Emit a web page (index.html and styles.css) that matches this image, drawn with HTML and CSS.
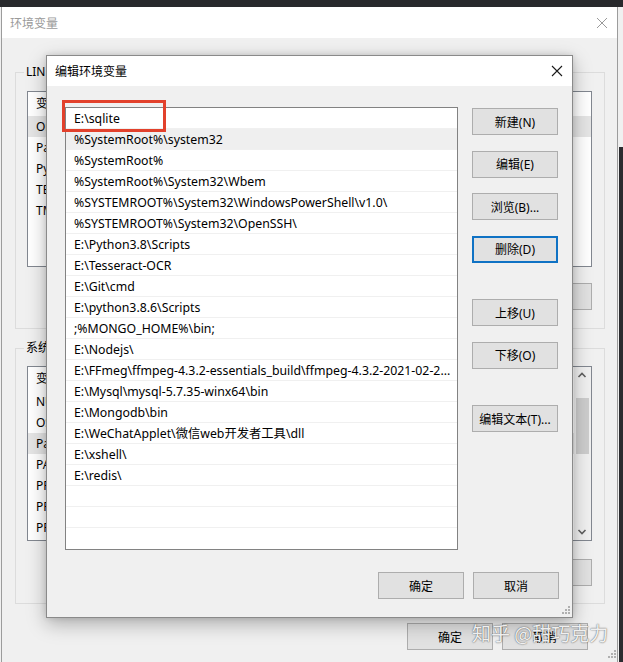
FILE: index.html
```html
<!DOCTYPE html>
<html lang="zh-CN">
<head>
<meta charset="utf-8">
<title>编辑环境变量</title>
<link rel="stylesheet" href="styles.css">
</head>
<body>
<div class="topbar"></div>
<div class="win">
  <div class="win-title">
    <span class="win-caption">环境变量</span>
    <svg class="win-close" width="12" height="12" viewBox="0 0 12 12"><path d="M1 1L11 11M11 1L1 11" stroke="#9a9a9a" stroke-width="1" fill="none"/></svg>
  </div>
  <div class="win-body">
    <div class="group g1">
      <div class="group-title">LIN 的用户变量(U)</div>
      <div class="lv lv1">
        <div class="lv-head">变量</div>
        <div class="lv-row sel">OneDrive</div>
        <div class="lv-row">Path</div>
        <div class="lv-row">PyCharm</div>
        <div class="lv-row">TEMP</div>
        <div class="lv-row">TMP</div>
      </div>
      <div class="group-btns"><button class="btn">新建(N)...</button><button class="btn">编辑(E)...</button><button class="btn">删除(D)</button></div>
    </div>
    <div class="group g2">
      <div class="group-title">系统变量(S)</div>
      <div class="lv lv2">
        <div class="lv-main">
          <div class="lv-head">变量</div>
          <div class="lv-row">NUMBER_OF_PROCESSORS</div>
          <div class="lv-row">OS</div>
          <div class="lv-row sel">Path</div>
          <div class="lv-row">PATHEXT</div>
          <div class="lv-row">PROCESSOR_ARCHITECTURE</div>
          <div class="lv-row">PROCESSOR_IDENTIFIER</div>
          <div class="lv-row">PROCESSOR_LEVEL</div>
        </div>
        <div class="vscroll">
          <svg width="16" height="17" viewBox="0 0 16 17"><path d="M4.5 10L8 6.5L11.5 10" stroke="#606060" stroke-width="1.6" fill="none"/></svg>
          <div class="vtrack"><div class="vthumb"></div></div>
          <svg width="16" height="17" viewBox="0 0 16 17"><path d="M4.5 7L8 10.5L11.5 7" stroke="#606060" stroke-width="1.6" fill="none"/></svg>
        </div>
      </div>
      <div class="group-btns"><button class="btn">新建(W)...</button><button class="btn">编辑(I)...</button><button class="btn">删除(L)</button></div>
    </div>
    <div class="win-foot"><button class="btn">确定</button><button class="btn">取消</button></div>
  </div>
  <svg class="grip grip-win" width="8" height="8" viewBox="0 0 8 8"><g fill="#b0b0b0"><rect x="6" y="0" width="2" height="2"/><rect x="3" y="3" width="2" height="2"/><rect x="6" y="3" width="2" height="2"/><rect x="0" y="6" width="2" height="2"/><rect x="3" y="6" width="2" height="2"/><rect x="6" y="6" width="2" height="2"/></g></svg>
</div>
<div class="desk-strip"></div>

<div class="dlg">
  <div class="dlg-title">
    <span class="dlg-caption">编辑环境变量</span>
    <svg class="dlg-close" width="12" height="12" viewBox="0 0 12 12"><path d="M1 1L11 11M11 1L1 11" stroke="#1a1a1a" stroke-width="1.1" fill="none"/></svg>
  </div>
  <div class="dlg-body">
    <div class="dlg-main">
      <div class="plist">
        <div class="hl"></div>
        <div class="prow">E:\sqlite</div>
        <div class="prow hov">%SystemRoot%\system32</div>
        <div class="prow">%SystemRoot%</div>
        <div class="prow">%SystemRoot%\System32\Wbem</div>
        <div class="prow">%SYSTEMROOT%\System32\WindowsPowerShell\v1.0\</div>
        <div class="prow">%SYSTEMROOT%\System32\OpenSSH\</div>
        <div class="prow">E:\Python3.8\Scripts</div>
        <div class="prow">E:\Tesseract-OCR</div>
        <div class="prow">E:\Git\cmd</div>
        <div class="prow">E:\python3.8.6\Scripts</div>
        <div class="prow">;%MONGO_HOME%\bin;</div>
        <div class="prow">E:\Nodejs\</div>
        <div class="prow">E:\FFmeg\ffmpeg-4.3.2-essentials_build\ffmpeg-4.3.2-2021-02-2...</div>
        <div class="prow">E:\Mysql\mysql-5.7.35-winx64\bin</div>
        <div class="prow">E:\Mongodb\bin</div>
        <div class="prow">E:\WeChatApplet\微信web开发者工具\dll</div>
        <div class="prow">E:\xshell\</div>
        <div class="prow">E:\redis\</div>
        <div class="prow"></div>
        <div class="prow"></div>
        <div class="prow last"></div>
      </div>
      <div class="side">
        <button class="btn">新建(N)</button>
        <button class="btn">编辑(E)</button>
        <button class="btn">浏览(B)...</button>
        <button class="btn focus">删除(D)</button>
        <button class="btn sep">上移(U)</button>
        <button class="btn">下移(O)</button>
        <button class="btn sep">编辑文本(T)...</button>
      </div>
    </div>
    <div class="dlg-foot"><button class="btn">确定</button><button class="btn">取消</button></div>
  </div>
  <svg class="grip grip-dlg" width="8" height="8" viewBox="0 0 8 8"><g fill="#b0b0b0"><rect x="6" y="0" width="2" height="2"/><rect x="3" y="3" width="2" height="2"/><rect x="6" y="3" width="2" height="2"/><rect x="0" y="6" width="2" height="2"/><rect x="3" y="6" width="2" height="2"/><rect x="6" y="6" width="2" height="2"/></g></svg>
</div>

<div class="watermark">知乎 @甜巧克力</div>
</body>
</html>
```

FILE: styles.css
```css
* { box-sizing: border-box; }
html, body { margin: 0; padding: 0; }
body {
  width: 623px;
  height: 662px;
  overflow: hidden;
  position: relative;
  background: #f0f0f0;
  font-family: "Noto Sans", "Noto Sans CJK SC", sans-serif;
  font-size: 12px;
  color: #000;
}
.topbar { height: 7px; background: #28292c; }

/* ---------- back window ---------- */
.win {
  margin-left: 1px;
  width: 617px;
  height: 655px;
  background: #f0f0f0;
  border-left: 1px solid #9c9c9c;
  border-right: 1px solid #9c9c9c;
  position: relative;
}
.win-title {
  height: 31px;
  background: #fff;
  display: flex;
  align-items: center;
  padding-left: 8px;
  padding-right: 9px;
}
.win-caption { color: #9a9a9a; flex: 1; }
.win-body { padding: 34px 12px 0 13px; }
.group {
  border: 1px solid #dcdcdc;
  padding: 0 12px 0 11px;
}
.group-title {
  width: fit-content;
  margin-top: -9px;
  margin-left: -3px;
  padding: 0 2px;
  line-height: 16px;
  background: #f0f0f0;
  white-space: nowrap;
}
.g1 { padding-bottom: 18px; }
.g2 { margin-top: 19px; padding-bottom: 17px; }
.lv {
  border: 1px solid #828790;
  background: #fff;
}
.lv1 { margin-top: 11px; height: 176px; }
.lv2 { margin-top: 10px; height: 175px; display: flex; }
.lv-main { flex: 1; }
.lv-head { height: 24px; line-height: 24px; padding-left: 8px; }
.lv-row { height: 21px; line-height: 21px; padding-left: 8px; }
.lv-row.sel { background: #e5e5e5; }
.vscroll {
  width: 17px;
  background: #f0f0f0;
  display: flex;
  flex-direction: column;
}
.vscroll svg { display: block; }
.vtrack { flex: 1; padding: 14px 1px 5px; }
.vthumb { height: 56px; background: #cdcdcd; margin-left: 1px; margin-right: 1px; }
.group-btns {
  display: flex;
  justify-content: flex-end;
  gap: 9px;
  margin-top: 16px;
}
.g2 .group-btns { margin-top: 18px; }
.btn {
  width: 86px;
  height: 27px;
  padding: 0;
  margin: 0;
  background: #e1e1e1;
  border: 1px solid #adadad;
  font-family: "Noto Sans", "Noto Sans CJK SC", sans-serif;
  font-size: 12px;
  color: #000;
  text-align: center;
}
.win-foot {
  display: flex;
  justify-content: flex-end;
  gap: 9px;
  margin-top: 19px;
  padding-right: 17px;
}
.grip { position: absolute; display: block; }
.grip-win { right: 1px; bottom: 4px; }
.desk-strip {
  position: absolute;
  left: 619px;
  top: 147px;
  width: 4px;
  height: 515px;
  background: #2b2c2f;
}

/* ---------- front dialog ---------- */
.dlg {
  position: absolute;
  left: 46px;
  top: 55px;
  width: 527px;
  height: 563px;
  border: 1px solid #8a8a8a;
  background: #f0f0f0;
  box-shadow: 0 6px 18px rgba(0, 0, 0, 0.28), 0 0 6px rgba(0, 0, 0, 0.12);
}
.dlg-title {
  height: 30px;
  background: #fff;
  display: flex;
  align-items: center;
  padding-left: 8px;
  padding-right: 9px;
}
.dlg-caption { flex: 1; }
.dlg-body { padding: 21px 13px 0 18px; }
.dlg-main {
  display: grid;
  grid-template-columns: 393px 86px;
  column-gap: 14px;
}
.plist {
  position: relative;
  height: 443px;
  border: 1px solid #828282;
  background: #fff;
}
.prow {
  height: 21px;
  padding-top: 2px;
  line-height: 18px;
  padding-left: 8px;
  font-size: 12.3px;
  border-bottom: 1px solid #f0f0f0;
  white-space: nowrap;
  overflow: hidden;
}
.prow.hov { background: #efefef; }
.prow.last { border-bottom: none; }
.hl {
  position: absolute;
  left: -4px;
  top: -8px;
  width: 104px;
  height: 32px;
  border: 3px solid #e2412c;
}
.side {
  display: flex;
  flex-direction: column;
  gap: 15.5px;
  padding-top: 1px;
}
.side .sep { margin-top: 21px; }
.btn.focus { border: 2px solid #0f72c4; }
.dlg-foot {
  display: flex;
  justify-content: flex-end;
  gap: 9px;
  margin-top: 22px;
}
.grip-dlg { right: 2px; bottom: 3px; }

.watermark {
  position: absolute;
  left: 472px;
  top: 620px;
  font-family: "Noto Sans CJK SC", sans-serif;
  font-size: 19px;
  line-height: 26px;
  color: rgba(255, 255, 255, 0.92);
  text-shadow: 0 0 1px rgba(0, 0, 0, 0.55), 0 0 2px rgba(0, 0, 0, 0.35);
  white-space: nowrap;
}
```
